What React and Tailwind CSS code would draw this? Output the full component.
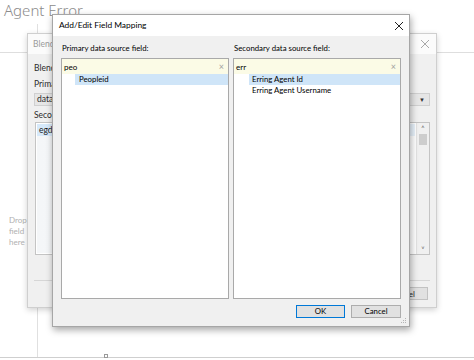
import React from 'react';

const ui = { fontFamily: 'Lato, "Noto Sans", Arial, sans-serif' };

const CloseX = ({ className }) => (
  <svg width="10" height="10" viewBox="0 0 10 10" className={className}>
    <path d="M1 1 L9 9 M9 1 L1 9" stroke="currentColor" strokeWidth="1" fill="none" />
  </svg>
);

const FieldPanel = ({ label, query, items, indent }) => (
  <div className="flex flex-col w-[168px]">
    <div className="h-[12px] leading-[12px] text-[7.8px] text-black pl-[1px]">{label}</div>
    <div className="mt-[4px] h-[241px] border border-[#a9a9a9] bg-white flex flex-col">
      <div className="h-[15px] bg-[#fbfbe6] flex items-center justify-between px-[2px]">
        <span className="text-[8px] text-black">{query}</span>
        <span className="text-[9px] text-[#a0a0a0] pr-[2px]">×</span>
      </div>
      <div className="flex flex-col">
        {items.map((it, i) => (
          <div
            key={it}
            className={`h-[11px] flex items-center text-[7.8px] text-black ${indent} ${
              i === 0 ? 'bg-[#cfe5f8]' : ''
            }`}
          >
            {it}
          </div>
        ))}
      </div>
    </div>
  </div>
);

const BackDialog = () => (
  <div className="absolute left-[27px] top-[33px] w-[410px] h-[275px] bg-[#f0f0f0] border border-[#cfcfcf] shadow-[0_2px_6px_rgba(0,0,0,0.18)] flex flex-col">
    <div className="h-[20px] bg-[#fbfbfb] flex items-center justify-between pl-[5px] pr-[6px]">
      <span className="text-[8.5px] text-[#9a9a9a]">Blend Data Sources</span>
      <CloseX className="text-[#a8a8a8]" />
    </div>
    <div className="flex flex-col px-[6px] pt-[8px] text-[8.5px] text-[#2a2a2a]">
      <div className="h-[12px] leading-[12px]">Blend type:</div>
      <div className="mt-[4px] h-[12px] leading-[12px]">Primary data source:</div>
      <div className="mt-[3px] h-[13px] bg-[#e6e6e6] border border-[#d0d0d0] flex items-center justify-between pl-[2px] pr-[4px]">
        <span>data</span>
        <span className="text-[6px] text-[#333]">▼</span>
      </div>
      <div className="mt-[3px] h-[12px] leading-[12px]">Secondary data source:</div>
      <div className="mt-[1px] ml-[1px] h-[133px] border border-[#c4c4c4] bg-white flex">
        <div className="flex-1 flex flex-col p-[1px]">
          <div className="h-[12px] pl-[2px] flex items-center bg-gradient-to-r from-[#d6e9fa] to-[#e9f3fc] text-[#1a1a1a]">egdata</div>
          <div className="flex-1 bg-gradient-to-r from-[#f4f6f8] to-white" />
        </div>
        <div className="w-[13px] bg-[#f0f0f0] border-l border-[#e2e2e2] flex flex-col items-center">
          <span className="text-[7px] leading-[10px] text-[#555]">˄</span>
          <div className="w-[8px] h-[11px] bg-[#cdcdcd] mt-[1px]" />
          <div className="flex-1" />
          <span className="text-[7px] leading-[10px] text-[#555]">˅</span>
        </div>
      </div>
      <div className="mt-[25px] h-px bg-[#d6d6d6]" />
      <div className="mt-[6px] flex justify-end pr-[2px]">
        <div className="h-[13px] w-[50px] bg-[#e1e1e1] border border-[#c2c2c2] flex items-center justify-center text-[8px]">Cancel</div>
      </div>
    </div>
  </div>
);

const FrontDialog = () => (
  <div className="absolute left-[52px] top-[14px] w-[358px] h-[313px] bg-[#f0f0f0] border border-[#a6a6a6] shadow-[1px_3px_7px_rgba(0,0,0,0.35)] flex flex-col">
    <div className="h-[21px] bg-white flex items-center justify-between pl-[6px] pr-[5px]">
      <span className="text-[8.4px] text-black">Add/Edit Field Mapping</span>
      <CloseX className="text-[#222]" />
    </div>
    <div className="flex flex-col px-[8px] pt-[6px]">
      <div className="flex gap-[4px]">
        <FieldPanel label="Primary data source field:" query="peo" items={['Peopleid']} indent="ml-[13px] pl-[4px]" />
        <FieldPanel
          label="Secondary data source field:"
          query="err"
          items={['Erring Agent Id', 'Erring Agent Username']}
          indent="ml-[15px] pl-[3px]"
        />
      </div>
      <div className="mt-[6px] flex justify-end gap-[6px]">
        <div className="h-[13px] w-[49px] bg-[#e1e1e1] border border-[#0078d7] flex items-center justify-center text-[7.8px] text-black">OK</div>
        <div className="h-[13px] w-[50px] bg-[#e1e1e1] border border-[#adadad] flex items-center justify-center text-[7.8px] text-black">Cancel</div>
      </div>
    </div>
    <svg width="6" height="6" viewBox="0 0 6 6" className="absolute right-[2px] bottom-[2px]">
      <rect x="4" y="0" width="1" height="1" fill="#b5b5b5" />
      <rect x="2" y="2" width="1" height="1" fill="#b5b5b5" />
      <rect x="4" y="2" width="1" height="1" fill="#b5b5b5" />
      <rect x="0" y="4" width="1" height="1" fill="#b5b5b5" />
      <rect x="2" y="4" width="1" height="1" fill="#b5b5b5" />
      <rect x="4" y="4" width="1" height="1" fill="#b5b5b5" />
    </svg>
  </div>
);

export default function App() {
  return (
    <div className="relative w-[474px] h-[360px] bg-white overflow-hidden" style={ui}>
      <div
        className="absolute left-[4px] top-[-1px] text-[15px] font-light text-[#8c8c8c]"
        style={{ fontFamily: '"Noto Sans", Lato, sans-serif' }}
      >
        Agent Error
      </div>
      <div className="absolute left-0 right-0 top-[52px] h-px bg-[#dedede]" />
      <div className="absolute left-[37px] top-[24px] bottom-[3px] w-px bg-[#e0e0e0]" />
      <div className="absolute left-[9px] top-[215px] text-[8px] leading-[11px] text-[#b0b0b0]">
        <div>Drop</div>
        <div>field</div>
        <div>here</div>
      </div>
      <div className="absolute left-0 right-0 top-[357px] h-px bg-[#cfcfcf]" />
      <div className="absolute left-[104px] top-[354px] w-[4px] h-[4px] border border-[#9a9a9a] bg-white" />
      <BackDialog />
      <FrontDialog />
    </div>
  );
}
